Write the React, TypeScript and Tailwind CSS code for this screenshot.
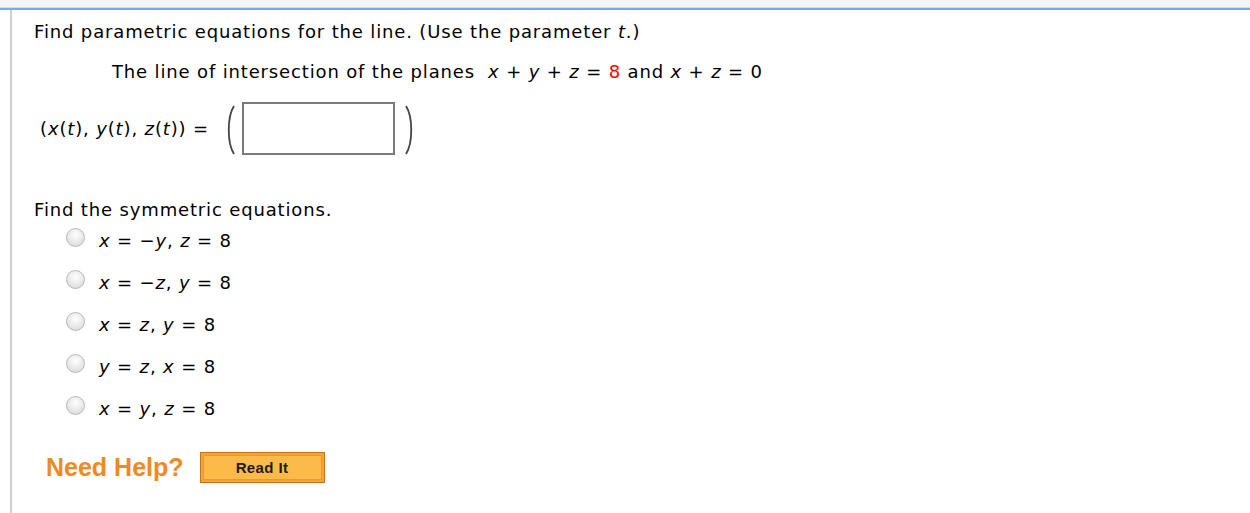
import React from "react";

const V = ({ c }: { c: string }) => <i className="italic">{c}</i>;

function Radio() {
  return (
    <span className="inline-block w-[19px] h-[19px] rounded-full border border-[#b9b9b9] bg-[radial-gradient(circle_at_50%_35%,#ffffff_0%,#e8e8e8_55%,#d4d4d4_100%)]" />
  );
}

const options: React.ReactNode[] = [
  <>
    <V c="x" /> = −<V c="y" />, <V c="z" /> = 8
  </>,
  <>
    <V c="x" /> = −<V c="z" />, <V c="y" /> = 8
  </>,
  <>
    <V c="x" /> = <V c="z" />, <V c="y" /> = 8
  </>,
  <>
    <V c="y" /> = <V c="z" />, <V c="x" /> = 8
  </>,
  <>
    <V c="x" /> = <V c="y" />, <V c="z" /> = 8
  </>,
];

export default function App() {
  return (
    <div className="w-[1250px] h-[513px] bg-white overflow-hidden text-black font-['DejaVu_Sans',Verdana,sans-serif] text-[18px] tracking-[0.85px]">
      <div className="h-[7px] bg-[#f5f5f5] border-b border-[#dcdcdc] box-content" />
      <div className="h-[2px] bg-[#78a9ee]" />
      <div className="flex h-[503px]">
        <div className="w-[10px]" />
        <div className="w-[2px] bg-[#cfcfcf]" />
        <div className="pl-[22px] pt-[11px] flex flex-col">
          <div className="leading-[22px]">
            Find parametric equations for the line. (Use the parameter <V c="t" />.)
          </div>
          <div className="leading-[22px] mt-[18px] pl-[78px] whitespace-pre">
            The line of intersection of the planes  <V c="x" /> + <V c="y" /> + <V c="z" /> ={" "}
            <span className="text-[#ff0000]">8</span> and <V c="x" /> + <V c="z" /> = 0
          </div>
          <div className="flex items-center mt-[19px] h-[52px] pl-[6px]">
            <span>
              (<V c="x" />(<V c="t" />), <V c="y" />(<V c="t" />), <V c="z" />(<V c="t" />)) =
            </span>
            <svg width="12" height="50" viewBox="0 0 12 50" className="ml-[15px] mt-[4px]">
              <path d="M10 1 C3 12, 3 38, 10 49" stroke="#444" strokeWidth="1.8" fill="none" />
            </svg>
            <div className="ml-[6px] w-[153px] h-[53px] border-2 border-[#7a7a7a] bg-white" />
            <svg width="12" height="50" viewBox="0 0 12 50" className="ml-[9px] mt-[4px]">
              <path d="M2 1 C9 12, 9 38, 2 49" stroke="#444" strokeWidth="1.8" fill="none" />
            </svg>
          </div>
          <div className="leading-[22px] mt-[45px]">Find the symmetric equations.</div>
          <div className="flex flex-col mt-[8px] gap-[20px] pl-[32px]">
            {options.map((o, i) => (
              <div key={i} className="flex items-center h-[22px]">
                <span className="mt-[1px]">
                  <Radio />
                </span>
                <span className="ml-[14px] whitespace-pre">{o}</span>
              </div>
            ))}
          </div>
          <div className="flex items-center mt-[30px] pl-[12px]">
            <span className="font-['Liberation_Sans',Arial,sans-serif] font-bold text-[25px] tracking-normal text-[#f0891e]">
              Need Help?
            </span>
            <button className="ml-[16px] w-[125px] h-[31px] border border-[#c47520] bg-[#f5a332] p-[2px]">
              <span className="flex items-center justify-center w-full h-full border border-[#e09a40] bg-[#fcbb48] font-['Liberation_Sans',Arial,sans-serif] font-bold text-[15px] tracking-[0.4px] text-[#1a1a1a]">
                Read It
              </span>
            </button>
          </div>
        </div>
      </div>
    </div>
  );
}
